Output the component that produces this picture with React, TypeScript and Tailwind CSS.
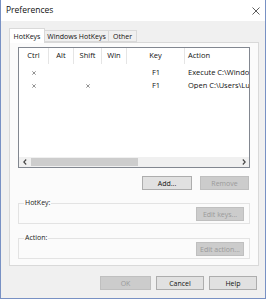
import { type ReactNode } from "react";

const font = { fontFamily: '"Open Sans", "Noto Sans", sans-serif' };

const rows = [
  { ctrl: true, alt: false, shift: false, win: false, key: "F1", action: "Execute C:\\Windows\\notepad.exe" },
  { ctrl: true, alt: false, shift: true, win: false, key: "F1", action: "Open C:\\Users\\Lucas\\Documents" },
];

function Btn({ children, disabled, className = "" }: { children: ReactNode; disabled?: boolean; className?: string }) {
  return (
    <div
      className={`flex h-[14px] items-center justify-center border text-[7px] leading-none ${
        disabled ? "border-[#bfbfbf] bg-[#cccccc] text-[#9a9a9a]" : "border-[#adadad] bg-[#e1e1e1] text-[#111]"
      } ${className}`}
    >
      {children}
    </div>
  );
}

function Group({ label, button }: { label: string; button: string }) {
  return (
    <fieldset className="ml-[8px] mr-[8px] h-[25px] border border-[#e3e3e3] px-0">
      <legend className="ml-[5px] px-[1px] text-[7px] leading-[8px] text-[#222]">{label}</legend>
      <div className="flex justify-end pr-[5px]">
        <Btn disabled className="w-[48px]">{button}</Btn>
      </div>
    </fieldset>
  );
}

function Mark({ on }: { on: boolean }) {
  if (!on) return null;
  return (
    <svg width="4" height="4" viewBox="0 0 4 4" className="text-[#777]">
      <path d="M0.3 0.3 L3.7 3.7 M3.7 0.3 L0.3 3.7" stroke="currentColor" strokeWidth="0.8" />
    </svg>
  );
}

export default function App() {
  return (
    <div
      style={font}
      className="flex h-[299px] w-[266px] flex-col border-x border-b border-[#7891c4] bg-[#f0f0f0] text-[#111]"
    >
      <div className="flex h-[21px] items-center justify-between bg-white pl-[5px] pr-[5px]">
        <span className="text-[8.5px]">Preferences</span>
        <svg width="8" height="8" viewBox="0 0 8 8" className="text-[#333]">
          <path d="M0.5 0.5 L7.5 7.5 M7.5 0.5 L0.5 7.5" stroke="currentColor" strokeWidth="0.8" />
        </svg>
      </div>

      <div className="flex flex-1 flex-col pl-[8px] pr-[6px] pt-[7px]">
        <div className="flex h-[14px] items-end text-[7px] leading-none">
          <div className="relative z-10 -mb-[1px] flex h-[15px] w-[36px] items-center justify-center border border-b-0 border-[#d9d9d9] bg-white">
            HotKeys
          </div>
          <div className="flex h-[12px] w-[64px] items-center justify-center border border-l-0 border-[#d9d9d9] bg-[#f0f0f0]">
            Windows HotKeys
          </div>
          <div className="flex h-[12px] w-[28px] items-center justify-center border border-l-0 border-[#d9d9d9] bg-[#f0f0f0]">
            Other
          </div>
        </div>

        <div className="flex h-[224px] flex-col border border-[#d9d9d9] bg-[#fbfbfb]">
          <div className="mx-[8px] mt-[4px] flex h-[121px] flex-col border border-[#828790] bg-white text-[7.5px] leading-none">
            <div className="flex h-[16px] items-center">
              <div className="flex h-full w-[30px] items-center justify-center border-r border-[#e5e5e5]">Ctrl</div>
              <div className="flex h-full w-[25px] items-center justify-center border-r border-[#e5e5e5]">Alt</div>
              <div className="flex h-full w-[28px] items-center justify-center border-r border-[#e5e5e5]">Shift</div>
              <div className="flex h-full w-[25px] items-center justify-center border-r border-[#e5e5e5]">Win</div>
              <div className="flex h-full w-[58px] items-center justify-center border-r border-[#e5e5e5]">Key</div>
              <div className="flex h-full flex-1 items-center pl-[3px]">Action</div>
            </div>
            <div className="mt-[2px] flex-1">
              {rows.map((r, i) => (
                <div key={i} className="flex h-[13px] items-center">
                  <div className="flex w-[30px] justify-center"><Mark on={r.ctrl} /></div>
                  <div className="flex w-[25px] justify-center"><Mark on={r.alt} /></div>
                  <div className="flex w-[28px] justify-center"><Mark on={r.shift} /></div>
                  <div className="flex w-[25px] justify-center"><Mark on={r.win} /></div>
                  <div className="flex w-[58px] justify-center">{r.key}</div>
                  <div className="flex-1 overflow-hidden whitespace-nowrap pl-[3px]">{r.action}</div>
                </div>
              ))}
            </div>
            <div className="flex h-[10px] items-center bg-[#f0f0f0]">
              <div className="flex w-[12px] justify-center">
                <svg width="4" height="6" viewBox="0 0 4 6"><path d="M3.2 0.5 L0.8 3 L3.2 5.5" fill="none" stroke="#444" strokeWidth="1.1" /></svg>
              </div>
              <div className="h-[8px] w-[107px] bg-[#cdcdcd]" />
              <div className="flex-1" />
              <div className="flex w-[10px] justify-center">
                <svg width="4" height="6" viewBox="0 0 4 6"><path d="M0.8 0.5 L3.2 3 L0.8 5.5" fill="none" stroke="#444" strokeWidth="1.1" /></svg>
              </div>
            </div>
          </div>

          <div className="mr-[9px] mt-[8px] flex justify-end gap-[8px]">
            <Btn className="w-[50px]">Add...</Btn>
            <Btn disabled className="w-[49px]">Remove</Btn>
          </div>

          <div className="mt-[9px] flex flex-col gap-[10px]">
            <Group label="HotKey:" button="Edit keys..." />
            <Group label="Action:" button="Edit action..." />
          </div>
        </div>

        <div className="mr-[2px] mt-[10px] flex justify-end gap-[5px]">
          <Btn disabled className="w-[51px]">OK</Btn>
          <Btn className="w-[48px]">Cancel</Btn>
          <Btn className="w-[48px]">Help</Btn>
        </div>
      </div>
    </div>
  );
}
